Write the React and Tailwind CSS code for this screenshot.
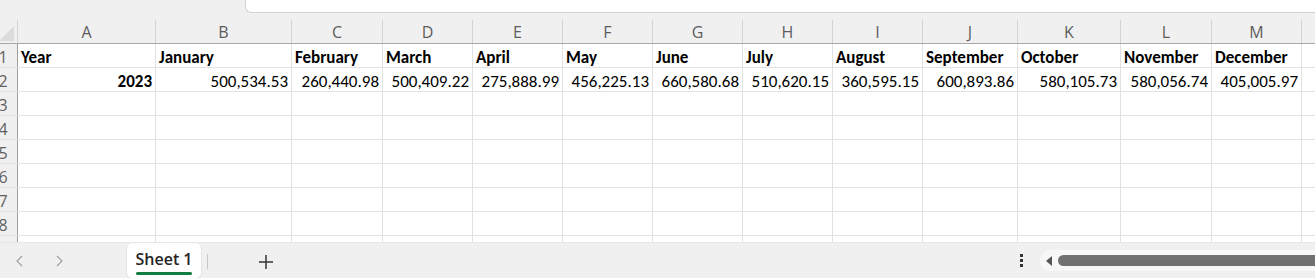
import React from "react";

const cols = [
  { l: "A", w: 138 },
  { l: "B", w: 136 },
  { l: "C", w: 91 },
  { l: "D", w: 90 },
  { l: "E", w: 90 },
  { l: "F", w: 90 },
  { l: "G", w: 90 },
  { l: "H", w: 90 },
  { l: "I", w: 90 },
  { l: "J", w: 95 },
  { l: "K", w: 103 },
  { l: "L", w: 91 },
  { l: "M", w: 90 },
  { l: "", w: 90 },
];

const row1 = ["Year", "January", "February", "March", "April", "May", "June", "July", "August", "September", "October", "November", "December", ""];
const row2 = ["2023", "500,534.53", "260,440.98", "500,409.22", "275,888.99", "456,225.13", "660,580.68", "510,620.15", "360,595.15", "600,893.86", "580,105.73", "580,056.74", "405,005.97", ""];

const cellFont = { fontFamily: "Carlito, Calibri, Lato, sans-serif" };

// row numbers are scrolled partly out of view, like the sheet in the picture
const RowHead = ({ n }) => (
  <div className="w-[18px] shrink-0 overflow-hidden border-r border-[#9f9f9f] bg-[#f0f0f0] h-[23px] flex items-center">
    <div className="w-[26px] shrink-0 ml-[-10px] mt-[3px] text-center text-[16px] text-[#5f5f5f] font-['Open_Sans',sans-serif] leading-none">
      {n}
    </div>
  </div>
);

const App = () => {
  const emptyRows = [3, 4, 5, 6, 7, 8, 9];
  return (
    <div className="w-[1315px] h-[278px] overflow-hidden bg-[#f0f0f0] flex flex-col font-['Lato',sans-serif]">
      {/* formula bar remnant */}
      <div className="h-[20px] shrink-0 flex">
        <div className="w-[245px] shrink-0" />
        <div className="flex-1 h-[13px] bg-white border-l border-b border-[#d1d1d1] rounded-bl-[6px]" />
      </div>

      {/* column headers */}
      <div className="h-[24px] shrink-0 flex border-b border-[#a8a8a8]">
        <div className="w-[18px] shrink-0 border-r border-[#d4d4d4] relative">
          <div className="absolute right-[3px] bottom-[2px] w-0 h-0 border-l-[15px] border-l-transparent border-b-[15px] border-b-[#dcdcdc]" />
        </div>
        {cols.map((c, i) => (
          <div
            key={i}
            style={{ width: c.w }}
            className="shrink-0 border-r border-[#d4d4d4] flex items-center justify-center text-[16px] text-[#5c5c5c] font-['Open_Sans',sans-serif] leading-none"
          >
            {c.l}
          </div>
        ))}
      </div>

      {/* grid */}
      <div className="flex-1 min-h-0 bg-white overflow-hidden">
        <div className="flex border-b border-[#e1e1e1]">
          <RowHead n={1} />
          {cols.map((c, i) => (
            <div
              key={i}
              style={{ width: c.w, ...cellFont }}
              className="shrink-0 h-[23px] border-r border-[#e1e1e1] flex items-end pb-[1px] px-[3px] text-[17px] font-bold text-black leading-none whitespace-nowrap"
            >
              {row1[i]}
            </div>
          ))}
        </div>
        <div className="flex border-b border-[#e1e1e1]">
          <RowHead n={2} />
          {cols.map((c, i) => (
            <div
              key={i}
              style={{ width: c.w, ...cellFont }}
              className={`shrink-0 h-[23px] border-r border-[#e1e1e1] flex items-end justify-end pb-[1px] px-[3px] text-[17px] text-black leading-none whitespace-nowrap ${i === 0 ? "font-bold" : ""}`}
            >
              {row2[i]}
            </div>
          ))}
        </div>
        {emptyRows.map((r) => (
          <div key={r} className="flex border-b border-[#e1e1e1]">
            <RowHead n={r} />
            {cols.map((c, i) => (
              <div key={i} style={{ width: c.w }} className="shrink-0 h-[23px] border-r border-[#e1e1e1]" />
            ))}
          </div>
        ))}
      </div>

      {/* sheet bar */}
      <div className="h-[36px] shrink-0 bg-[#f0f0f0] border-t border-[#e6e6e6] flex items-center relative">
        <div className="w-[126px] shrink-0 flex items-center pl-[14px] gap-[27px] text-[#a0a0a0]">
          <svg width="12" height="14" viewBox="0 0 12 14" fill="none" stroke="currentColor" strokeWidth="1.2">
            <path d="M8 2 L3 7 L8 12" />
          </svg>
          <svg width="12" height="14" viewBox="0 0 12 14" fill="none" stroke="currentColor" strokeWidth="1.2">
            <path d="M4 2 L9 7 L4 12" />
          </svg>
        </div>
        <div className="w-[76px] h-[36px] shrink-0 bg-white rounded-[6px] flex flex-col items-center justify-center border border-[#e4e4e4] border-t-0">
          <span className="text-[16px] font-semibold text-[#242424] leading-none mt-[5px] font-['Open_Sans',sans-serif]">Sheet 1</span>
          <div className="w-[56px] h-[3px] bg-[#107c41] mt-[5px] rounded-sm" />
        </div>
        <div className="w-px h-[15px] bg-[#c8c8c8] ml-[5px] mt-[2px]" />
        <div className="ml-[50px] mt-[2px] text-[#333]">
          <svg width="16" height="16" viewBox="0 0 16 16" stroke="currentColor" strokeWidth="1.5">
            <path d="M8 1 V15 M1 8 H15" />
          </svg>
        </div>
        <div className="flex-1" />
        <div className="flex flex-col gap-[2px] mr-[17px]">
          <div className="w-[3px] h-[3px] bg-[#333]" />
          <div className="w-[3px] h-[3px] bg-[#333]" />
          <div className="w-[3px] h-[3px] bg-[#333]" />
        </div>
        <div className="w-[275px] h-[21px] bg-[#f7f7f7] rounded-l-full flex items-center pl-[6px]">
          <div className="w-0 h-0 border-y-[5px] border-y-transparent border-r-[6px] border-r-[#555]" />
          <div className="flex-1 h-[11px] ml-[6px] bg-[#707070] rounded-l-full" />
        </div>
      </div>
    </div>
  );
};

export default App;
